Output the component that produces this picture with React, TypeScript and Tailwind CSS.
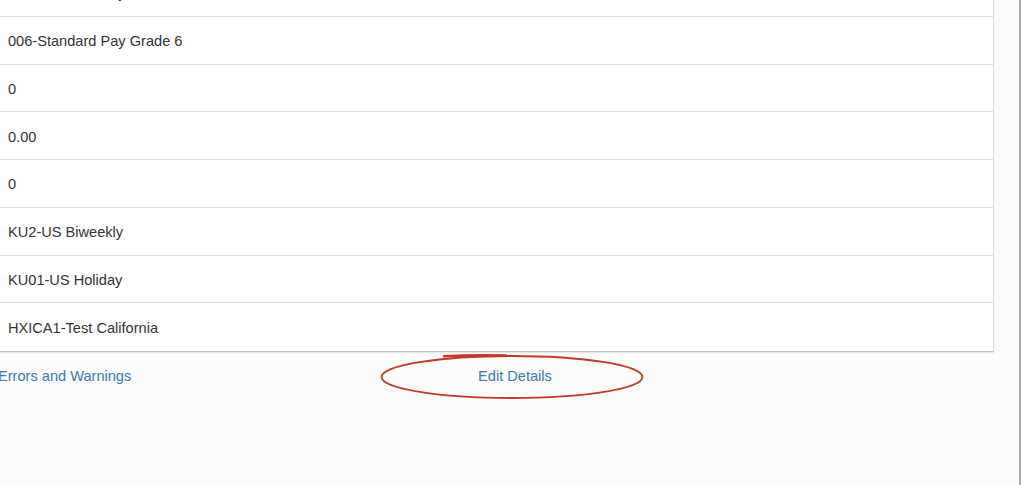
const rows = [
  "006-Standard Pay Grade",
  "006-Standard Pay Grade 6",
  "0",
  "0.00",
  "0",
  "KU2-US Biweekly",
  "KU01-US Holiday",
  "HXICA1-Test California",
];

export default function App() {
  return (
    <div
      className="flex h-[485px] w-[1024px] overflow-hidden bg-[#fcfcfc] text-[14.6px] text-[#333]"
      style={{ fontFamily: '"Liberation Sans", Arial, sans-serif' }}
    >
      <div className="w-[1019px] shrink-0">
        {/* detail rows */}
        <div className="-mt-[31px] w-[994px] border-r border-b border-r-[#dcdcdc] border-b-[#c4c4c4] bg-white shadow-[0_1px_1px_rgba(0,0,0,0.08)]">
          {rows.map((r, i) => (
            <div
              key={i}
              className="flex h-[47.75px] items-center border-b border-[#e0e0e0] pl-[8px] pt-[4px] last:border-b-0"
            >
              {r}
            </div>
          ))}
        </div>

        {/* links */}
        <div className="mt-[14px] grid grid-cols-[380px_264px] leading-[20px] text-[#3b78b8]">
          <div className="-ml-[2px]">Errors and Warnings</div>
          <div className="relative pl-[6px] text-center">
            Edit Details
            <svg
              className="pointer-events-none absolute left-0 top-[-13px]"
              width="266"
              height="47"
              viewBox="0 0 266 47"
              fill="none"
            >
              <ellipse cx="132" cy="24" rx="130.5" ry="21" stroke="#c0392b" strokeWidth="1.8" />
              <path d="M64 3.2 C 85 2.3, 110 2.3, 126 2.6" stroke="#c0392b" strokeWidth="2.6" strokeLinecap="round" />
            </svg>
          </div>
        </div>
      </div>
      <div className="w-[2px] shrink-0 bg-[#a8a8a8]" />
      <div className="flex-1 bg-white" />
    </div>
  );
}
